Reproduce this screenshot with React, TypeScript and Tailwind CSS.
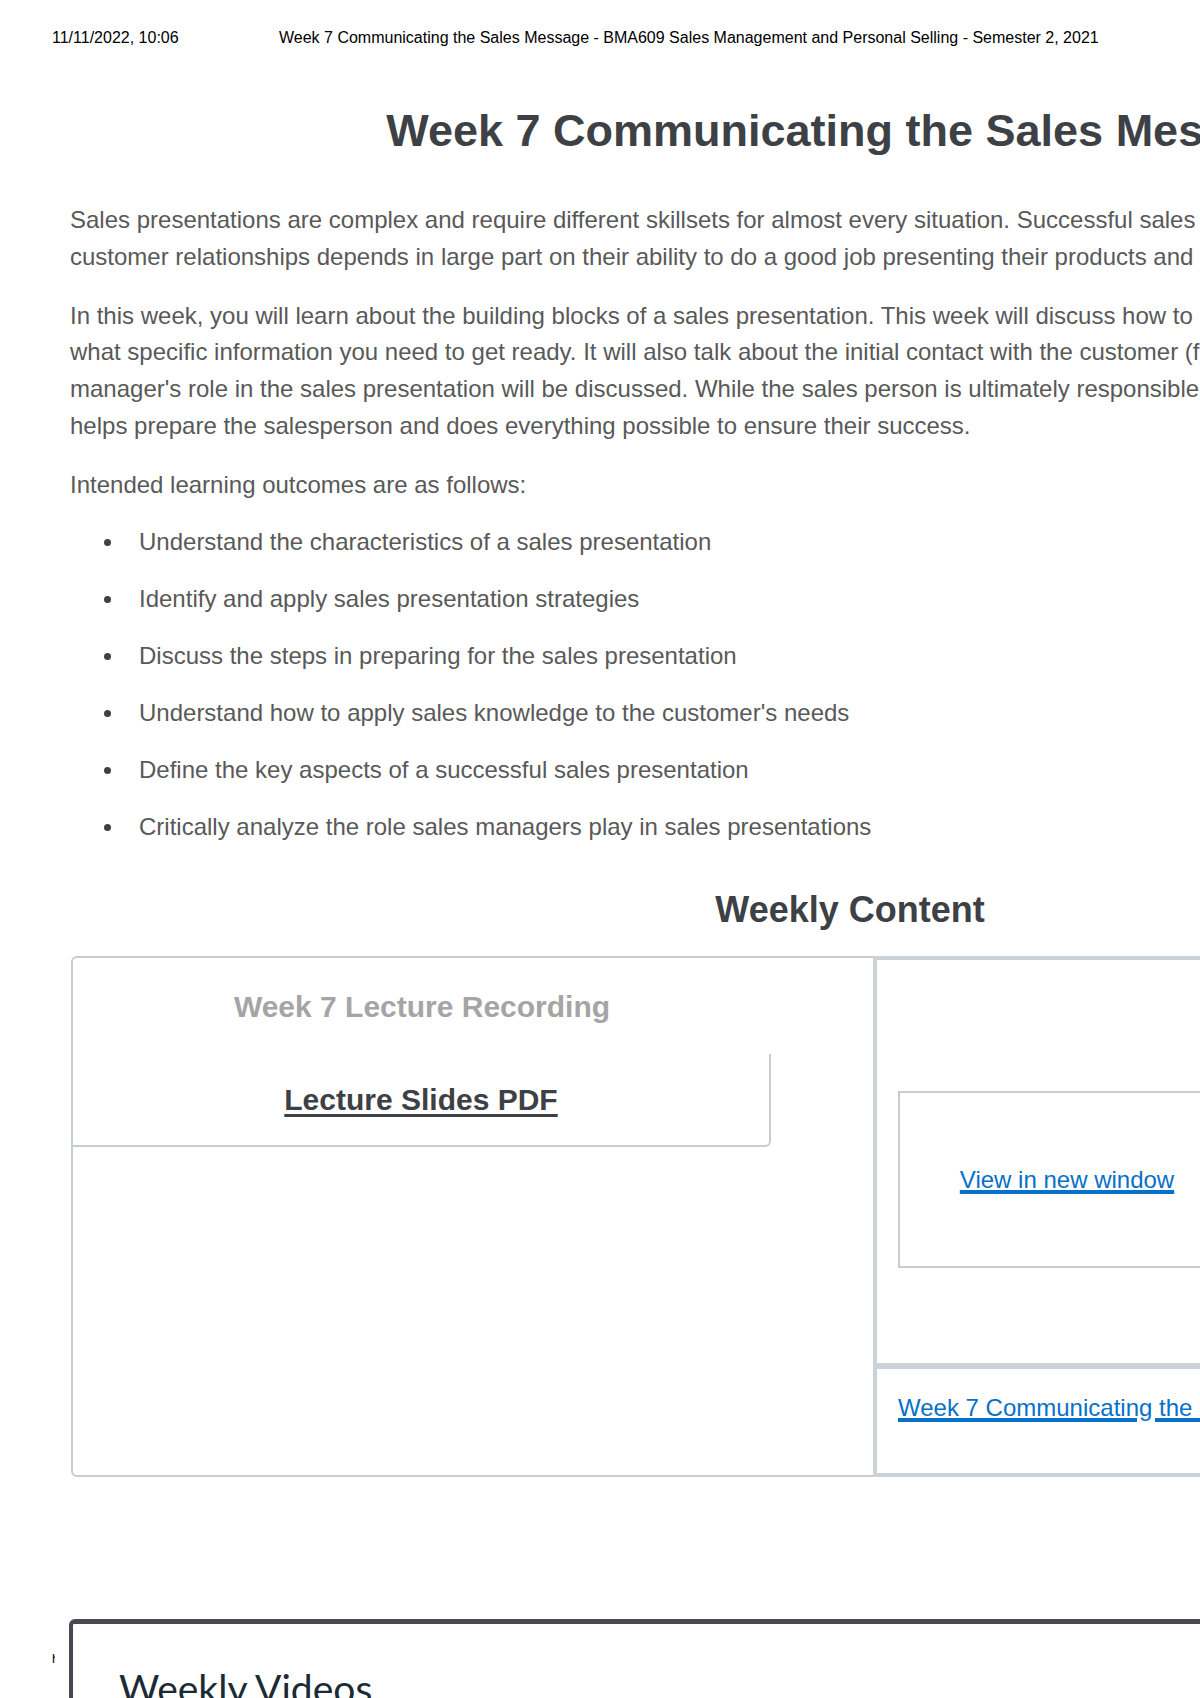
import React from "react";

const bullets = [
  "Understand the characteristics of a sales presentation",
  "Identify and apply sales presentation strategies",
  "Discuss the steps in preparing for the sales presentation",
  "Understand how to apply sales knowledge to the customer's needs",
  "Define the key aspects of a successful sales presentation",
  "Critically analyze the role sales managers play in sales presentations",
];

export default function App() {
  return (
    <div className="w-[1200px] h-[1698px] overflow-hidden bg-white font-['Liberation_Sans',Arial,sans-serif]">
      {/* print header */}
      <div className="flex pt-[29px] text-[16px] leading-[18px] text-black whitespace-nowrap">
        <div className="w-[279px] pl-[52px] shrink-0">11/11/2022, 10:06</div>
        <div>Week 7 Communicating the Sales Message - BMA609 Sales Management and Personal Selling - Semester 2, 2021</div>
      </div>

      <div className="ml-[70px] w-[1536px]">
        <h1 className="mt-[57px] pl-[16px] text-[45px] leading-[53px] font-bold text-[#3d4145] text-center whitespace-nowrap">
          Week 7 Communicating the Sales Message
        </h1>

        <div className="mt-[45px] text-[24px] leading-[36.7px] text-[#595959] whitespace-nowrap">
          <p>
            <span className="block">Sales presentations are complex and require different skillsets for almost every situation. Successful sales people's ability to build long-term</span>
            <span className="block">customer relationships depends in large part on their ability to do a good job presenting their products and services.</span>
          </p>
          <p className="mt-[22.3px]">
            <span className="block">In this week, you will learn about the building blocks of a sales presentation. This week will discuss how to prepare for a sales presentation and</span>
            <span className="block">what specific information you need to get ready. It will also talk about the initial contact with the customer (first impressions). Finally, the sales</span>
            <span className="block">manager's role in the sales presentation will be discussed. While the sales person is ultimately responsible for the presentation, the sales manager</span>
            <span className="block">helps prepare the salesperson and does everything possible to ensure their success.</span>
          </p>
          <p className="mt-[22.3px]">Intended learning outcomes are as follows:</p>
          <ul className="mt-[20.5px] flex flex-col gap-[20.4px]">
            {bullets.map((b) => (
              <li key={b} className="flex items-center">
                <span className="ml-[34px] w-[7px] h-[7px] rounded-full bg-[#3d4145] shrink-0" />
                <span className="ml-[28px]">{b}</span>
              </li>
            ))}
          </ul>
        </div>

        <h2 className="mt-[41.5px] pl-[24px] text-[36px] leading-[43px] font-bold text-[#3d4145] text-center whitespace-nowrap">
          Weekly Content
        </h2>

        {/* weekly content grid */}
        <div className="mt-[25.5px] ml-px flex h-[521px]">
          <div className="w-[802px] shrink-0 flex flex-col border-l-2 border-t-2 border-b-2 border-[#c7cdd1] rounded-l-[6px]">
            <div className="w-[698px] h-[96px] flex items-center justify-center">
              <span className="text-[30px] font-bold text-[#a5a5a5] whitespace-nowrap">Week 7 Lecture Recording</span>
            </div>
            <div className="w-[698px] h-[93px] flex items-center justify-center border-r-2 border-b-2 border-[#c7cdd1] rounded-br-[6px]">
              <a className="text-[30px] font-bold text-[#3d4145] underline decoration-[3px] underline-offset-[4px] whitespace-nowrap">
                Lecture Slides PDF
              </a>
            </div>
          </div>

          <div className="w-[720px] shrink-0 flex flex-col border-l-4 border-t-4 border-b-4 border-[#cbd2d8]">
            <div className="h-[403px] pt-[131px] pl-[21px]">
              <div className="w-[338px] h-[177px] border-2 border-[#c7cdd1] flex items-center justify-center">
                <a className="text-[24px] leading-[30px] text-[#0770c8] underline decoration-[4px] underline-offset-[2px] whitespace-nowrap">
                  View in new window
                </a>
              </div>
            </div>
            <div className="h-[6px] bg-[#cbd2d8]" />
            <div className="pt-[24px] pl-[21px]">
              <a className="text-[24px] leading-[30px] text-[#0770c8] underline decoration-[4px] underline-offset-[2px] whitespace-nowrap">
                Week 7 Communicating the Sales Message
              </a>
            </div>
          </div>
        </div>
      </div>

      {/* weekly videos */}
      <div className="mt-[142px] flex">
        <div className="w-[69px] shrink-0 pl-[52px] pt-[32px] text-[13px] leading-[16px] text-black overflow-hidden">
          <div className="w-[3px] overflow-hidden">h</div>
        </div>
        <div className="w-[1300px] h-[200px] border-l-4 border-t-[5px] border-[#474b4f] rounded-tl-[6px] pl-[46px] pt-[41px]">
          <h2 className="font-['Lato',sans-serif] text-[39px] leading-[46px] text-[#1b2a34] whitespace-nowrap">Weekly Videos</h2>
        </div>
      </div>
    </div>
  );
}
